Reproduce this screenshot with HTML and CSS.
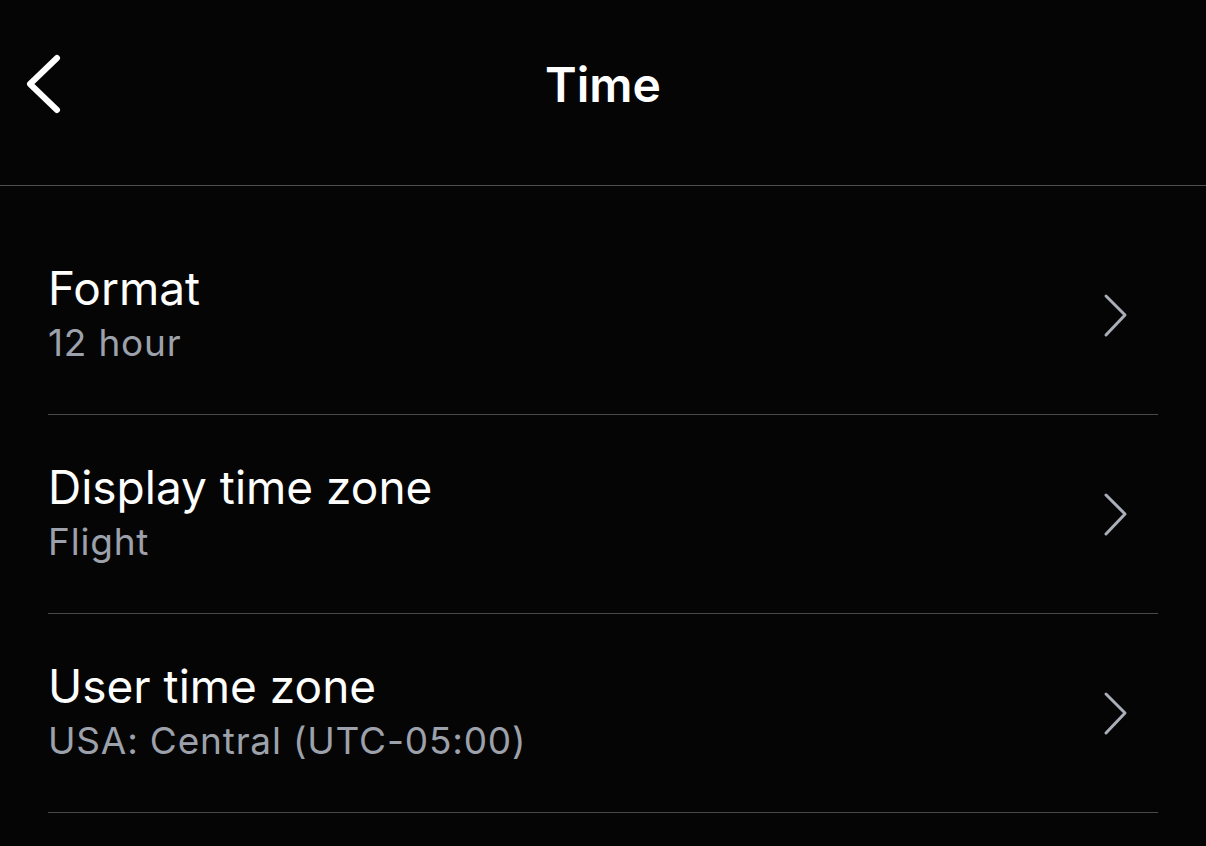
FILE: index.html
```html
<!DOCTYPE html>
<html>
	<head>
		<meta charset="utf-8">
		<link rel="stylesheet" href="styles.css">
	</head>
	<body>
		<div class="header">
			<button class="back" aria-label="Back">
				<svg width="40" height="64" viewBox="0 0 40 64">
					<polyline points="31,5 4,31 31,57" fill="none" stroke="#fff" stroke-width="6" stroke-linecap="round" stroke-linejoin="round"/>
				</svg>
			</button>
			<h1 class="titlu">Time</h1>
			<div></div>
		</div>

		<div class="lista">
			<div class="rand">
				<div class="texte">
					<div class="nume">Format</div>
					<div class="valoare">12 hour</div>
				</div>
				<svg class="sageata" width="28" height="46" viewBox="0 0 28 46">
					<polyline points="4,4 23,23 4,43" fill="none" stroke="#a9aeb8" stroke-width="3" stroke-linecap="round" stroke-linejoin="round"/>
				</svg>
			</div>
			<div class="rand">
				<div class="texte">
					<div class="nume">Display time zone</div>
					<div class="valoare">Flight</div>
				</div>
				<svg class="sageata" width="28" height="46" viewBox="0 0 28 46">
					<polyline points="4,4 23,23 4,43" fill="none" stroke="#a9aeb8" stroke-width="3" stroke-linecap="round" stroke-linejoin="round"/>
				</svg>
			</div>
			<div class="rand">
				<div class="texte">
					<div class="nume">User time zone</div>
					<div class="valoare">USA: Central (UTC-05:00)</div>
				</div>
				<svg class="sageata" width="28" height="46" viewBox="0 0 28 46">
					<polyline points="4,4 23,23 4,43" fill="none" stroke="#a9aeb8" stroke-width="3" stroke-linecap="round" stroke-linejoin="round"/>
				</svg>
			</div>
		</div>
	</body>
</html>
```

FILE: styles.css
```css
body{
	margin: 0;
	background-color: #050505;
	color: #fff;
	font-family: Inter, "Noto Sans", sans-serif;
}
.header{
	display: grid;
	grid-template-columns: 1fr auto 1fr;
	align-items: center;
	height: 185px;
	border-bottom: 1px solid #4f4f4f;
}
.back{
	justify-self: start;
	background: none;
	border: none;
	margin-top: -16px;
	padding: 0 0 0 26px;
	display: flex;
}
.titlu{
	margin: 0;
	margin-top: -16px;
	font-size: 48px;
	font-weight: 600;
}
.lista{
	margin: 0 48px;
	padding-top: 30px;
}
.rand{
	display: flex;
	align-items: center;
	justify-content: space-between;
	height: 198px;
	border-bottom: 1px solid #48484d;
	padding-right: 28px;
}
.nume{
	font-size: 46px;
	line-height: 56px;
}
.valoare{
	font-size: 37px;
	line-height: 54px;
	color: #9ca1ab;
	letter-spacing: 0.8px;
}
```
